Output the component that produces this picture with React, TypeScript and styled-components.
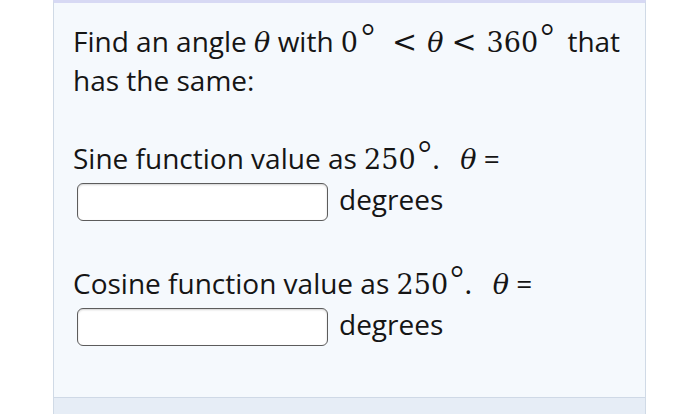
import styled, { createGlobalStyle } from "styled-components"

const Global = createGlobalStyle`
    html, body {
        margin:0;
        padding:0;
        background:#ffffff;
    }
    body {
        font-family: "Open Sans", "Noto Sans", sans-serif;
        color:#151515;
    }
`
const Page = styled.div`
    width:700px;
    height:414px;
    padding-left:53px;
    box-sizing:border-box;
    overflow:hidden;
`
const Card = styled.div`
    width:593px;
    box-sizing:border-box;
    border-top:3px solid #d7d9f4;
    border-left:1px solid #d0dae6;
    border-right:1px solid #d0dae6;
    background:#f5f9fd;
`
const Body = styled.div`
    height:394px;
    box-sizing:border-box;
    padding:19px 19px 0;
    font-size:28px;
    line-height:39px;
`
const Footer = styled.div`
    height:16px;
    border-top:1px solid #cfd9e6;
    background:#e6edf6;
`
const Para = styled.p`
    margin:0 0 39px;
`
const Line = styled.div`
    white-space:nowrap;
`
// math runs, in a serif close to the TeX look
const M = styled.span<{$lead?:number}>`
    font-family: "DejaVu Serif", "Liberation Serif", serif;
    font-size:27px;
    line-height:1;
    margin-left:${p=>p.$lead ?? 0}px;
`
const V = styled.i<{$gap?:number}>`
    font-style:italic;
    margin-left:${p=>p.$gap ?? 0}px;
`
const Rel = styled.span`
    font-size:30px;
    margin:0 10px 0 8px;
`
const Deg = styled.span<{$gap:number, $after?:number}>`
    display:inline-block;
    font-family: "Liberation Serif", serif;
    line-height:0;
    font-size:35px;
    vertical-align:4px;
    margin-left:${p=>p.$gap}px;
    margin-right:${p=>p.$after ?? 0}px;
`
const AnswerRow = styled.div`
    display:flex;
    align-items:flex-start;
    padding:5px 0 4px;
    margin-bottom:39px;
`
const Box = styled.input`
    width:251px;
    height:38px;
    box-sizing:border-box;
    margin:0 0 0 4px;
    border:1.5px solid #5c5c5c;
    border-radius:6px;
    background:#ffffff;
    box-shadow: inset 0 1px 2px rgba(0,0,0,0.18);
    outline:none;
`
const Unit = styled.span`
    margin-left:11px;
    line-height:33px;
`

const Question = ({label}:{label:string}) => <>
    <Line>
        {label} function value as <M>250<Deg $gap={2}>°</Deg>.<V $gap={20}>θ</V></M> =
    </Line>
    <AnswerRow>
        <Box type="text"/>
        <Unit>degrees</Unit>
    </AnswerRow>
</>

const App = () => {
    return <Page>
        <Global/>
        <Card>
            <Body>
                <Para>
                    <Line>Find an angle <M><V>θ</V></M> with <M>0<Deg $gap={3} $after={9}>°</Deg><Rel>&lt;</Rel><V>θ</V><Rel>&lt;</Rel>360<Deg $gap={2} $after={6}>°</Deg></M> that</Line>
                    <Line>has the same:</Line>
                </Para>
                <Question label="Sine"/>
                <Question label="Cosine"/>
            </Body>
            <Footer/>
        </Card>
    </Page>
}

export default App
